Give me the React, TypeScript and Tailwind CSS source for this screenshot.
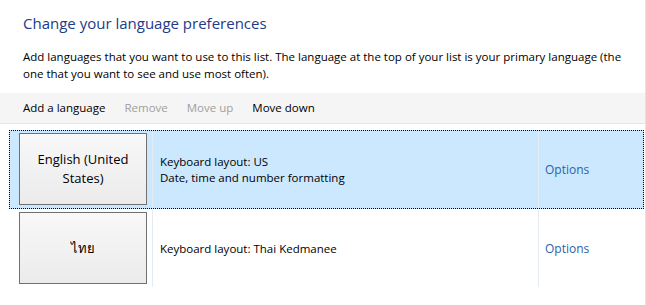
import React from 'react';

const langs = [
  { id: 'en', name: 'English (United States)', lines: ['Keyboard layout: US', 'Date, time and number formatting'], selected: true },
  { id: 'th', name: 'ไทย', lines: ['Keyboard layout: Thai Kedmanee'], selected: false },
];

const tools = [
  { label: 'Add a language', disabled: false },
  { label: 'Remove', disabled: true },
  { label: 'Move up', disabled: true },
  { label: 'Move down', disabled: false },
];

export default function App() {
  return (
    <div
      className="h-[305px] w-[646px] overflow-hidden border-r border-[#dde5d3] bg-white text-black"
      style={{ fontFamily: '"Open Sans", "Noto Sans", sans-serif' }}
    >
      <h1 className="pl-[23px] pt-[12px] text-[15px] leading-[23px] text-[#223a88]">
        Change your language preferences
      </h1>
      <p className="mt-[13px] pl-[23px] pr-[2px] text-[11.5px] leading-[17px]">
        Add languages that you want to use to this list. The language at the top of your list is your primary language (the one that you want to see and use most often).
      </p>

      {/* toolbar */}
      <div className="mt-[11px] flex h-[31px] items-center gap-[19px] border-b border-[#e6e6e6] bg-[#f5f5f5] pl-[23px] text-[11.5px]">
        {tools.map((t) => (
          <span key={t.label} className={t.disabled ? 'text-[#a0a0a0]' : 'text-black'}>
            {t.label}
          </span>
        ))}
      </div>

      {/* list */}
      <div className="mt-[6px] flex flex-col">
        {langs.map((l) => (
          <div
            key={l.id}
            className={
              'ml-[9px] mr-[1px] flex h-[79px] text-[11.5px] ' +
              (l.selected ? 'border border-dotted border-black bg-[#cce8ff]' : 'border border-transparent')
            }
          >
            <div className="flex w-[143px] shrink-0 border-r border-[#e4ecf2] pl-[9px] pt-[2px]">
              <div className="flex h-[72px] w-[128px] items-center justify-center border border-[#707070] bg-gradient-to-b from-[#f8f8f8] to-[#ebebeb] px-2 text-center text-[13px] leading-[19px]">
                {l.name}
              </div>
            </div>
            <div className="flex w-[386px] shrink-0 flex-col justify-center border-r border-[#e4ecf2] pl-[7px] leading-[16px]">
              {l.lines.map((line) => (
                <div key={line}>{line}</div>
              ))}
            </div>
            <div className="flex flex-1 items-center pl-[6px] text-[12px] text-[#2a62a8]">Options</div>
          </div>
        ))}
      </div>
    </div>
  );
}
